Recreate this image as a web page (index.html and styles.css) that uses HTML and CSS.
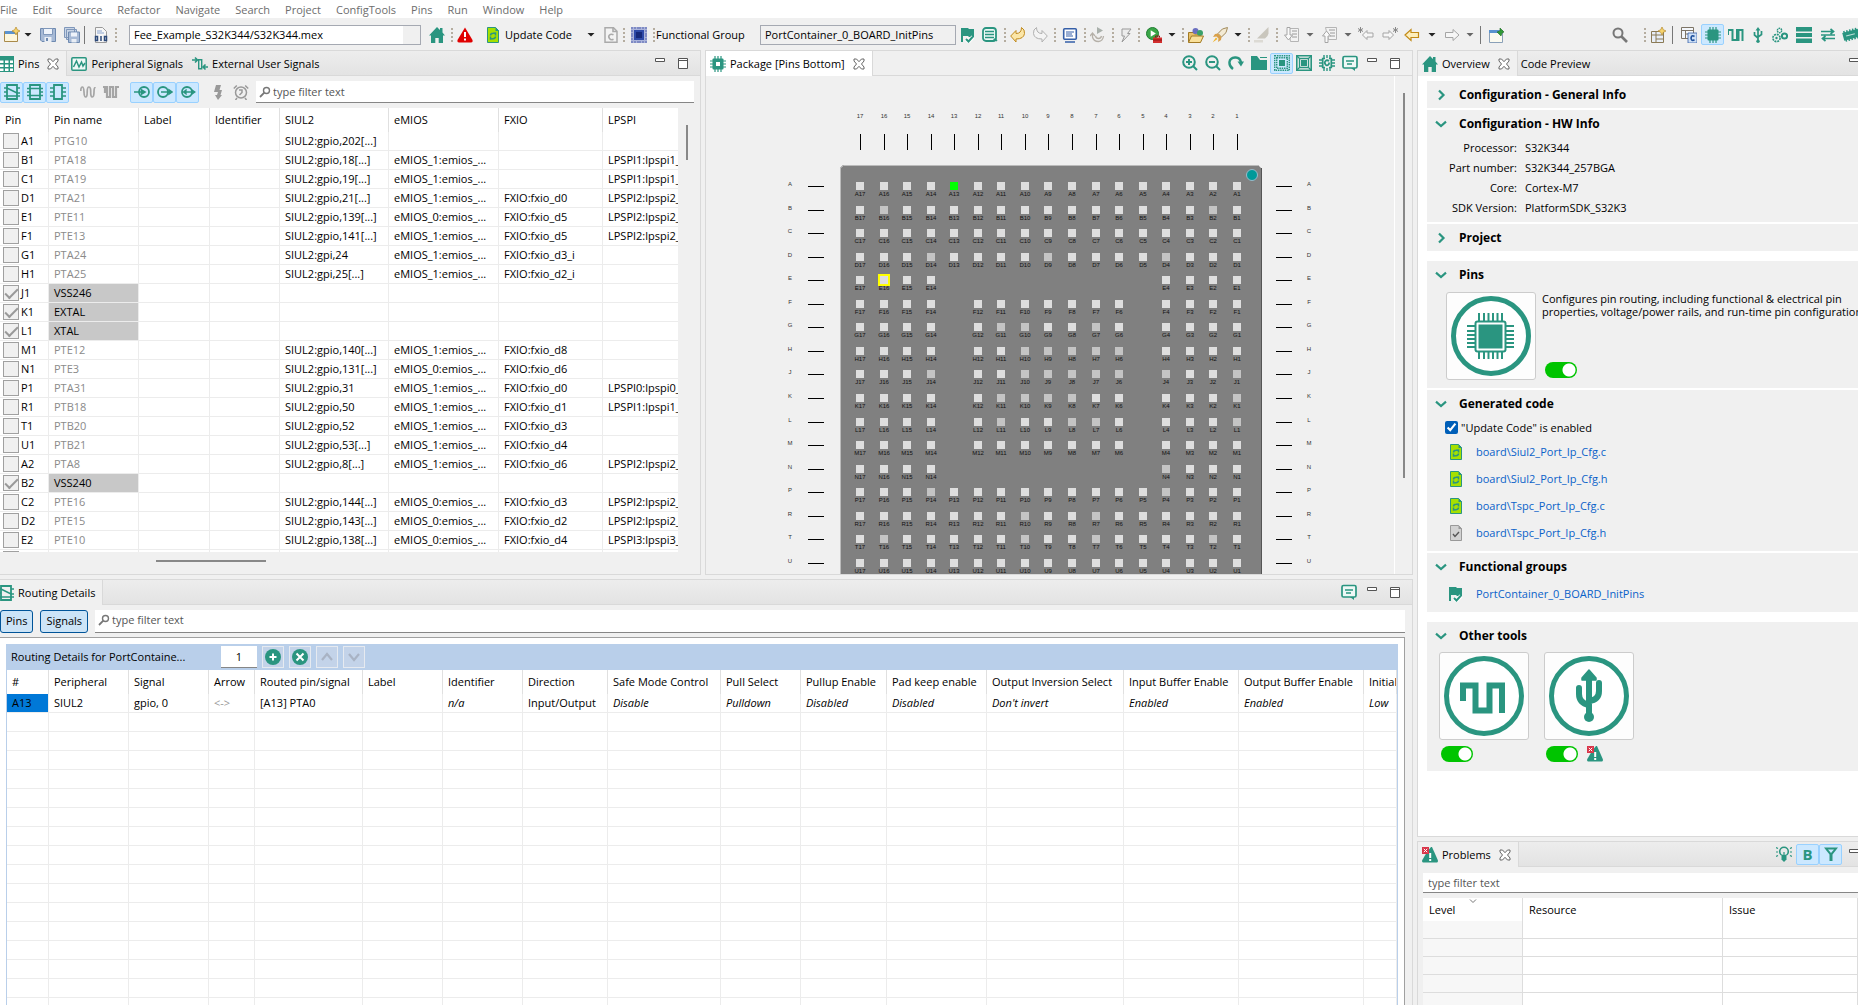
FILE: index.html
```html
<!DOCTYPE html>
<html lang="en">
<head>
<meta charset="utf-8">
<title>Fee_Example_S32K344 - Pins</title>
<link rel="stylesheet" href="styles.css">
</head>
<body>
<svg class="defs" aria-hidden="true">
  <symbol id="new" viewBox="0 0 16 16"><path d="M.5 4.5h13v10H.5z" fill="#fdf6dc" stroke="#a98a4a"/><path d="M1 4h12v3H1z" fill="#5b93cf"/><path d="M12 0l1.300 2.700L16 4l-2.700 1.300L12 8l-1.300-2.700L8 4l2.700-1.300z" fill="#f6d36b" stroke="#b58a2c" stroke-width=".7"/></symbol>
  <symbol id="save" viewBox="0 0 16 16"><path d="M.5 1.500h15v13H2l-1.500-1.500z" fill="#a7bad6" stroke="#6f8ab0"/><path d="M3.500 1.500h9v6h-9z" fill="#eef3fa" stroke="#7f97ba"/><path d="M4.500 10h7v5h-7z" fill="#e9eef5"/><path d="M6 11h2v3H6z" fill="#6f8ab0"/></symbol>
  <symbol id="saveall" viewBox="0 0 16 16"><path d="M.5.500h10v10H.5zM2.500 2.500h10v10h-10z" fill="#c9d5e6" stroke="#7f97ba"/><path d="M4.500 5h11v10.500h-11z" fill="#a7bad6" stroke="#6f8ab0"/><path d="M7 5.500h6v4H7z" fill="#eef3fa"/><path d="M7.500 12h5v3.500h-5z" fill="#e9eef5"/></symbol>
  <symbol id="bin" viewBox="0 0 16 16"><path d="M2.500.500h7l4 4v11h-11z" fill="#f6f6f6" stroke="#9a9a9a"/><path d="M4 4h5M4 6h7" stroke="#8aa4cf"/><path d="M2.500 9.500h2v4h-2zM11.500 9.500h2v4h-2zM8 9v5" fill="none" stroke="#2d4a7a" stroke-width="1.500"/></symbol>
  <symbol id="home" viewBox="0 0 16 16"><path d="M8 0l3 3V1h2.500v4.500L16 8.500h-2V16H9.700v-5H6.300v5H2V8.500H0z" fill="#2a9580"/></symbol>
  <symbol id="alert" viewBox="0 0 16 16"><path d="M8 .5L15.500 13q.5 2.500-1.500 2.500H2Q0 15.500.5 13z" fill="#e00000"/><path d="M7 5h2v5H7zM7 11.500h2v2H7z" fill="#fff"/></symbol>
  <symbol id="gen" viewBox="0 0 16 16"><path d="M2.500.500h8l3 3v12h-11z" fill="#a5e000" stroke="#2a9580"/><path d="M10.500 0v4H14z" fill="#2a9580"/><path d="M5.500 8.500Q5.500 6.500 8 6.300l2.500-.3v2.500M10.500 9.500q0 2-2.500 2.200l-2.500.3V9.500" fill="none" stroke="#2a9580" stroke-width="1.500"/></symbol>
  <symbol id="cdoc" viewBox="0 0 16 16"><path d="M2 .8h8.500L14 4.300v10.900H2z" fill="#f3f3f3" stroke="#aaa" stroke-width="1.500"/><path d="M10 .5v4h4M10.500 7.800Q8 6.500 6.500 8t0 3.500 4 .8" fill="none" stroke="#aaa" stroke-width="1.600"/></symbol>
  <symbol id="chipblue" viewBox="0 0 16 16"><path d="M0 0h16v16H0z" fill="#7f8bc4"/><path d="M0 2.500h16M0 5.500h16M0 10.500h16M0 13.500h16M2.500 0v16M5.500 0v16M10.500 0v16M13.500 0v16" stroke="#aab3da"/><path d="M3 3h10v10H3z" fill="#2e4aa8"/><path d="M5 5h6v6H5z" fill="#16297a"/></symbol>
  <symbol id="flag" viewBox="0 0 16 16"><path d="M1 1h7l1 1h5v8H9L8 9H3v6H1z" fill="#2a9580"/><path d="M6 12l2.500 2.500L13 10" fill="none" stroke="#fff" stroke-width="4"/><path d="M6 12l2.500 2.500L13 9.500" fill="none" stroke="#2a9580" stroke-width="2"/></symbol>
  <symbol id="db" viewBox="0 0 16 16"><rect x="1" y="1" width="13" height="13" rx="3" fill="#eef8f6" stroke="#2a9580" stroke-width="1.800"/><path d="M3 4.500h9M3 7.500h9M3 10.500h9" stroke="#2a9580" stroke-width="1.500"/><path d="M11 14l2-2 2 2" stroke="#2a9580" stroke-width="1.500" fill="none"/></symbol>
  <symbol id="undo" viewBox="0 0 16 16"><path d="M6 3.500v3q5.500 0 5.500-6 3.500 2 3 6-.7 5.500-8.500 5.500v3L.7 9z" fill="#fbe6a8" stroke="#c08a1e"/></symbol>
  <symbol id="redo" viewBox="0 0 16 16"><path d="M10 3.500v3q-5.500 0-5.500-6-3.500 2-3 6Q2.200 12 10 12v3l5.300-6z" fill="#f4f4f4" stroke="#b0b0b0"/></symbol>
  <symbol id="screen" viewBox="0 0 16 16"><rect x="1.700" y="1.700" width="12.600" height="10.600" rx="1" fill="#fff" stroke="#355fa8" stroke-width="1.600"/><path d="M4 5h8M4 7h6M4 9h7" stroke="#355fa8"/><path d="M3 15h10" stroke="#355fa8" stroke-width="1.500"/></symbol>
  <symbol id="refresh" viewBox="0 0 16 16"><path d="M7 0l6 3.500L7 7z" fill="#a9b0ab"/><path d="M2.500 7v3q1 4.500 6 4.500 4.500-.5 5-5.500M0 9l2.500-3L5 9M5.500 9q.5 2.500 3 2.500t3-2.500" fill="none" stroke="#b5b0a8" stroke-width="1.300"/></symbol>
  <symbol id="flash" viewBox="0 0 16 16"><path d="M4 2h9L9.500 6.500H12L4 15l2.500-6H4z" fill="#ececec" stroke="#999"/></symbol>
  <symbol id="run" viewBox="0 0 16 16"><circle cx="6.500" cy="6.500" r="6" fill="#3aa648" stroke="#1f7d30"/><path d="M4.700 3.200v6.600l5.200-3.300z" fill="#fff"/><path d="M7 10.500h9v5.500H7z" fill="#d22e2e"/><path d="M9.500 10.500v-1.500h4v1.500M7 13h9" stroke="#8e1414" fill="none"/></symbol>
  <symbol id="open" viewBox="0 0 16 16"><path d="M.5 5.500h5l1 1.500h6v8H.5z" fill="#e9c26a" stroke="#a27a25"/><circle cx="7.500" cy="4" r="3" fill="#6b6fc0"/><circle cx="12" cy="6" r="3" fill="#3aa06a"/><path d="M.5 15.500l3-6.500h12l-3 6.500z" fill="#f9e09a" stroke="#a27a25"/></symbol>
  <symbol id="rocket" viewBox="0 0 16 16"><path d="M15.500.5Q10 .5 6 6.500L9.500 10Q15.500 6 15.500.5z" fill="#f3ead4" stroke="#a18a5c"/><path d="M6 6.500l-3 .5L1 10l3.500-.5 2 2L6 15l3-2 .5-3z" fill="#d9a04a"/><path d="M4 10.500L.5 15.500 5.500 12z" fill="#f0b429"/></symbol>
  <symbol id="knife" viewBox="0 0 16 16"><path d="M14.500 0L3 11.500h8q3-2 3.500-5z" fill="#c9c6bd"/><path d="M0 13h9v2.500H0z" fill="#dcdad4"/></symbol>
  <symbol id="down" viewBox="0 0 16 16"><path d="M4.500 1.500h10v13h-8z" fill="#f3f3f3" stroke="#b5b5b5"/><path d="M8 4h5M8 7h5M8 10h5" stroke="#9a9a9a"/><path d="M3 .5h3V8h2.500l-4 5-4-5H3z" fill="#fafafa" stroke="#a5a5a5"/></symbol>
  <symbol id="up" viewBox="0 0 16 16"><path d="M3.500.500h11v12h-8z" fill="#f3f3f3" stroke="#b5b5b5"/><path d="M7 3h6M8 6h5M8 9h5" stroke="#9a9a9a"/><path d="M3 15.500h3V9h2.500l-4-5-4 5H3z" fill="#fafafa" stroke="#a5a5a5"/></symbol>
  <symbol id="backs" viewBox="0 0 16 16"><path d="M4.500 8L9 3.500v2.500h6v4H9v2.500z" fill="#f6f6f6" stroke="#a5a5a5"/><path d="M2.500 0v6M0 1.500l5 3M5 1.500l-5 3" stroke="#888"/></symbol>
  <symbol id="fwds" viewBox="0 0 16 16"><path d="M11.500 8L7 3.500v2.500H1v4h6v2.500z" fill="#f6f6f6" stroke="#a5a5a5"/><path d="M13.500 0v6M11 1.500l5 3M16 1.500l-5 3" stroke="#888"/></symbol>
  <symbol id="back" viewBox="0 0 16 16"><path d="M1 8l6-5.500v3h7.500v5H7v3z" fill="#fdeebb" stroke="#c28a17" stroke-width="1.200"/></symbol>
  <symbol id="fwd" viewBox="0 0 16 16"><path d="M15 8L9 2.500v3H1.500v5H9v3z" fill="#f6f6f6" stroke="#a5a5a5"/></symbol>
  <symbol id="pinned" viewBox="0 0 16 16"><path d="M.5 3.500h13v12H.5z" fill="#fbfaf0" stroke="#8aa0b8"/><path d="M0 3h10v3H0z" fill="#5b93cf"/><path d="M11 1l4 4-2 1-1 3-4-4 3-1z" fill="#2f9a36" stroke="#1c6a22" stroke-width=".6"/></symbol>
  <symbol id="search" viewBox="0 0 16 16"><circle cx="6" cy="6" r="4.500" fill="none" stroke="#777" stroke-width="2"/><path d="M9.500 9.500l5.500 5.500" stroke="#777" stroke-width="2.600"/></symbol>
  <symbol id="persp" viewBox="0 0 16 16"><path d="M1.500 4.500h12v11h-12z" fill="#e8eef7" stroke="#8a7a55"/><path d="M1.500 8h12M6 4.500v11M6 12h7" stroke="#8a7a55"/><path d="M12 0l1.300 2.700L16 4l-2.700 1.300L12 8l-1.300-2.700L8 4l2.700-1.300z" fill="#f6d36b" stroke="#b58a2c" stroke-width=".7"/></symbol>
  <symbol id="cpersp" viewBox="0 0 16 16"><path d="M.5.500h12v11H.5z" fill="#f3f6fa" stroke="#7d7466"/><path d="M.5 3.500h12M4.500 3.500v8M4.500 7h8" stroke="#7d7466"/><path d="M7 6h9v10H7z" fill="#cfe0f5" stroke="#355fa8" stroke-width=".8"/><path d="M13.500 9.500q-2-1.500-3 0t0 3.200 3 0" fill="none" stroke="#1d4f9c" stroke-width="1.600"/></symbol>
  <symbol id="chip" viewBox="0 0 16 16"><path d="M5 0v16M8 0v16M11 0v16M0 5h16M0 8h16M0 11h16" stroke="#2a9580" stroke-width="1.200"/><rect x="2.500" y="2.500" width="11" height="11" rx="1" fill="#2a9580"/></symbol>
  <symbol id="chiphole" viewBox="0 0 16 16"><path d="M5 0v16M8 0v16M11 0v16M0 5h16M0 8h16M0 11h16" stroke="#2a9580" stroke-width="1.200"/><rect x="2.500" y="2.500" width="11" height="11" rx="1" fill="#2a9580"/><path d="M6 6h4v4H6z" fill="#fff"/></symbol>
  <symbol id="wave" viewBox="0 0 16 16"><path d="M0 8V3h4.500v10H9V3h5.500v11M10.500 14V3" fill="none" stroke="#2a9580" stroke-width="2"/></symbol>
  <symbol id="usb" viewBox="0 0 16 16"><path d="M8 0l2.500 3.500h-5z" fill="#2a9580"/><path d="M8 2v12M4.500 5v3l3.500 3M11.500 4v3.500L8 10" fill="none" stroke="#2a9580" stroke-width="1.700"/><circle cx="8" cy="14.200" r="1.700" fill="#2a9580"/></symbol>
  <symbol id="gears" viewBox="0 0 16 16"><circle cx="4.500" cy="11" r="3.600" fill="none" stroke="#2a9580" stroke-width="1.600" stroke-dasharray="2 .8"/><circle cx="4.500" cy="11" r="1.200" fill="#2a9580"/><circle cx="7.500" cy="3.500" r="2.200" fill="none" stroke="#2a9580" stroke-width="1.400" stroke-dasharray="1.500 .6"/><circle cx="12.500" cy="9" r="2.600" fill="none" stroke="#2a9580" stroke-width="2"/></symbol>
  <symbol id="stack" viewBox="0 0 16 16"><path d="M0 0h16v4.500H0zM0 6h16v4H0zM0 11.500h16V16H0z" fill="#2a9580"/></symbol>
  <symbol id="swap" viewBox="0 0 16 16"><path d="M1 4.500h12M1 8h14M3 11.500h12M10.500 2l3 2.500-3 2.500M5.500 9l-3 2.500 3 2.500" fill="none" stroke="#2a9580" stroke-width="1.700"/></symbol>
  <symbol id="chiptilt" viewBox="0 0 16 16"><g transform="rotate(-15 8 8)"><path d="M3 2.500v11M6 2.500v11M9 2.500v11M12 2.500v11M15 2.500v11" stroke="#2a9580" stroke-width="1.500"/><path d="M1 4h16v8H1z" fill="#2a9580"/><path d="M4 8h9" stroke="#bfe0d8"/></g></symbol>
  <symbol id="grid" viewBox="0 0 16 16"><path d="M0 0h16v16H0z" fill="#2a9580"/><path d="M1.500 4.500h4v2.500h-4zM7 4.500h3.500v2.500H7zM12 4.500h3v2.500h-3zM1.500 8.500h4V11h-4zM7 8.500h3.500V11H7zM12 8.500h3V11h-3zM1.500 12.500h4V15h-4zM7 12.500h3.500V15H7zM12 12.500h3V15h-3z" fill="#fff"/></symbol>
  <symbol id="psig" viewBox="0 0 16 16"><rect x=".8" y="1.800" width="14.400" height="12.400" rx="1" fill="#eef8f6" stroke="#2a9580" stroke-width="1.500"/><path d="M2.500 11l3-6 2.500 6 2.500-5 1.500 4 2-3" fill="none" stroke="#2a9580" stroke-width="1.500"/></symbol>
  <symbol id="esig" viewBox="0 0 16 16"><path d="M0 4h5M3 1.500L5.500 4 3 6.500M16 11h-4M13.500 8.500L11 11l2.500 2.500" fill="none" stroke="#2a9580" stroke-width="1.600"/><path d="M6.700 3.700h3v9h-3z" fill="none" stroke="#2a9580" stroke-width="1.400"/></symbol>
  <symbol id="close" viewBox="0 0 12 12"><path d="M1 1h2.500L6 3.700 8.500 1H11v2L8.500 6 11 9v2H8.500L6 8.300 3.500 11H1V9l2.500-3L1 3z" fill="#fff" stroke="#666"/></symbol>
  <symbol id="min" viewBox="0 0 12 12"><path d="M1.500 1.500h9v3h-9z" fill="#fff" stroke="#555"/></symbol>
  <symbol id="max" viewBox="0 0 12 12"><path d="M1.500 1.500h9v10h-9z" fill="#fff" stroke="#555"/><path d="M1.500 3.500h9" stroke="#555"/></symbol>
  <symbol id="t1" viewBox="0 0 16 16"><path d="M3 1h10v14H3z" fill="none" stroke="#2a9580" stroke-width="1.800"/><path d="M0 4h3l10 5h3M0 8h3M0 12h16M13 4h3" fill="none" stroke="#2a9580" stroke-width="1.700"/></symbol>
  <symbol id="t2" viewBox="0 0 16 16"><path d="M3 1h10v14H3z" fill="none" stroke="#2a9580" stroke-width="1.800"/><path d="M0 4.500h16M0 8h3M13 8h3M0 11.500h16" stroke="#2a9580" stroke-width="1.700"/></symbol>
  <symbol id="t3" viewBox="0 0 16 16"><path d="M4 1h8v14H4z" fill="none" stroke="#2a9580" stroke-width="1.800"/><path d="M0 4h4M0 8h4M0 12h4M12 4h4M12 8h4M12 12h4" stroke="#2a9580" stroke-width="1.700"/></symbol>
  <symbol id="analog" viewBox="0 0 16 16"><path d="M.8 7q0-4 1.500-4t1.700 5 1.700 5 1.500-5T9 3t1.700 5 1.600 5T14 8t1.500-4" fill="none" stroke="#a5a5a5" stroke-width="1.700"/></symbol>
  <symbol id="digital" viewBox="0 0 16 16"><path d="M0 3h4v10h3V3h3v10h3V3h3M2 3v6" fill="none" stroke="#a5a5a5" stroke-width="2.200"/></symbol>
  <symbol id="in" viewBox="0 0 16 16"><circle cx="10" cy="8" r="5" fill="none" stroke="#2a9580" stroke-width="1.800"/><path d="M0 8h10M7.500 6L11 8l-3.500 2z" fill="#2a9580" stroke="#2a9580" stroke-width="1.600"/></symbol>
  <symbol id="out" viewBox="0 0 16 16"><circle cx="6" cy="8" r="5" fill="none" stroke="#2a9580" stroke-width="1.800"/><path d="M4 8h9M12 6l3 2-3 2z" fill="#2a9580" stroke="#2a9580" stroke-width="1.600"/></symbol>
  <symbol id="io" viewBox="0 0 16 16"><circle cx="7" cy="8" r="5" fill="none" stroke="#2a9580" stroke-width="1.800"/><path d="M4 8h9M6 6L3.500 8 6 10zM12 6l3 2-3 2z" fill="#2a9580" stroke="#2a9580" stroke-width="1.300"/></symbol>
  <symbol id="bolt" viewBox="0 0 16 16"><path d="M6 1h5L9.500 6H12l-1.500 5H12l-4 5-3-5h2l1-3H4z" fill="#999"/></symbol>
  <symbol id="clock" viewBox="0 0 16 16"><circle cx="8" cy="8.500" r="5.500" fill="none" stroke="#999" stroke-width="1.500"/><path d="M.8 4.500l3-3M15.200 4.500l-3-3M6 6h3v2.500L6.500 11M4 14l-1.500 2M12 14l1.500 2" fill="none" stroke="#999" stroke-width="1.500"/></symbol>
  <symbol id="mag" viewBox="0 0 12 12"><circle cx="7.500" cy="4.500" r="3" fill="#fff" stroke="#777" stroke-width="1.400"/><path d="M5.300 6.700L1 11" stroke="#777" stroke-width="1.800"/></symbol>
  <symbol id="zin" viewBox="0 0 16 16"><circle cx="7" cy="7" r="5.800" fill="none" stroke="#2a9580" stroke-width="2"/><path d="M11 11l4 4M4 7h6M7 4v6" stroke="#2a9580" stroke-width="2"/></symbol>
  <symbol id="zout" viewBox="0 0 16 16"><circle cx="7" cy="7" r="5.800" fill="none" stroke="#2a9580" stroke-width="2"/><path d="M11 11l4 4M4 7h6" stroke="#2a9580" stroke-width="2"/></symbol>
  <symbol id="rot" viewBox="0 0 16 16"><path d="M5 14Q1 11 1.500 7T7 2.500t6 5" fill="none" stroke="#2a9580" stroke-width="2.400"/><path d="M9.500 6.500H16l-3 5z" fill="#2a9580"/></symbol>
  <symbol id="folder" viewBox="0 0 16 16"><path d="M0 1h6l3 4h7v10H0z" fill="#2a9580"/><path d="M9 2.500h7" stroke="#2a9580"/></symbol>
  <symbol id="bga" viewBox="0 0 16 16"><path d="M.7.700h14.600v14.600H.7z" fill="none" stroke="#2a9580" stroke-width="1.400" stroke-dasharray="1.500 .8"/><path d="M2.700 2.700h10.600v10.600H2.700z" fill="none" stroke="#2a9580" stroke-width="1.400" stroke-dasharray="1.500 .8"/><path d="M5 5h6v6H5z" fill="#2a9580"/></symbol>
  <symbol id="qfp" viewBox="0 0 16 16"><path d="M.8.800h14.400v14.400H.8z" fill="none" stroke="#2a9580" stroke-width="1.600"/><path d="M3.500 3.500h9v9h-9zM1 1l3 3M15 1l-3 3M1 15l3-3M15 15l-3-3" fill="none" stroke="#2a9580" stroke-width="1.300"/><path d="M5 5h6v6H5z" fill="#2a9580"/></symbol>
  <symbol id="chipsync" viewBox="0 0 16 16"><path d="M5 0v3M8 0v3M11 0v3M5 13v3M8 13v3M11 13v3M0 5h3M0 8h3M0 11h3M13 5h3M13 8h3M13 11h3" stroke="#2a9580" stroke-width="1.400"/><path d="M6 3.500H3.700v9H6M10 3.500h2.300v9H10M10 6Q8 4.500 6.500 6T6.500 9.500 10 9V7.500" fill="none" stroke="#2a9580" stroke-width="1.700"/></symbol>
  <symbol id="note" viewBox="0 0 16 16"><rect x="1" y="1.500" width="14" height="11.500" rx="1.500" fill="#eef8f6" stroke="#2a9580" stroke-width="1.700"/><path d="M4 6h8M5 9h5" stroke="#2a9580" stroke-width="1.400"/><path d="M9 13h4v3z" fill="#2a9580"/></symbol>
  <symbol id="warn" viewBox="0 0 16 16"><path d="M9 0h1L16 13.500q0 2-1 2H1q-1 0-1-2L5 5z" fill="#2a9580"/><path d="M7.200 6h2v5h-2zM7.200 12h2v2h-2z" fill="#fff"/><path d="M0 0h7v7H0z" fill="#d9364a"/><path d="M1.800 1.800l3.400 3.400M5.200 1.800L1.800 5.200" stroke="#fff"/></symbol>
  <symbol id="bulb" viewBox="0 0 16 16"><circle cx="8" cy="5.500" r="4.300" fill="none" stroke="#2a9580" stroke-width="1.600"/><path d="M5.500 10h5v3.500L8 16l-2.500-2.500z" fill="#2a9580"/><path d="M0 1.500l2 1M0 6h2M0 10.500l2-1M16 1.500l-2 1M16 6h-2M16 10.500l-2-1M8 6v4" stroke="#2a9580" stroke-width="1.200"/></symbol>
  <symbol id="filter" viewBox="0 0 16 16"><path d="M1 1.500h14L9.500 8.500V15h-3V8.500z" fill="#2a9580"/><path d="M5 3.500h6L8 7z" fill="#cce8ff"/></symbol>
  <symbol id="plus" viewBox="0 0 16 16"><circle cx="8" cy="8" r="8" fill="#2a9580"/><path d="M4.500 8h7M8 4.500v7" stroke="#fff" stroke-width="2"/></symbol>
  <symbol id="cross" viewBox="0 0 16 16"><circle cx="8" cy="8" r="8" fill="#2a9580"/><path d="M4.500 4.500l7 7M11.500 4.500l-7 7" stroke="#fff" stroke-width="2"/></symbol>
  <symbol id="chu" viewBox="0 0 16 16"><path d="M3 11l5-6 5 6" fill="none" stroke="#a9b3c4" stroke-width="2.200"/></symbol>
  <symbol id="chd" viewBox="0 0 16 16"><path d="M3 5l5 6 5-6" fill="none" stroke="#a9b3c4" stroke-width="2.200"/></symbol>
  <symbol id="docok" viewBox="0 0 16 16"><path d="M2.500.500h8l3 3v12h-11z" fill="#d2d2d2" stroke="#999"/><path d="M10.500 0v4H14z" fill="#999"/><path d="M5 9l2 2.500L11 7" fill="none" stroke="#555" stroke-width="1.400"/></symbol>
  <symbol id="right" viewBox="0 0 12 12"><path d="M4 1.500L8.500 6 4 10.500" fill="none" stroke="#2a9580" stroke-width="2.200"/></symbol>
  <symbol id="openv" viewBox="0 0 12 12"><path d="M1 3.700L6 8l5-4.300" fill="none" stroke="#2a9580" stroke-width="2.200"/></symbol>
  <symbol id="sort" viewBox="0 0 8 4"><path d="M1 .5l3 3 3-3" fill="none" stroke="#777"/></symbol>
</svg>

<nav class="menubar">
  <button>File</button><button>Edit</button><button>Source</button><button>Refactor</button><button>Navigate</button><button>Search</button><button>Project</button><button>ConfigTools</button><button>Pins</button><button>Run</button><button>Window</button><button>Help</button>
</nav>

<div class="toolbar">
  <svg class="ic m4"><use href="#new"/></svg><i class="caret m4"></i>
  <svg class="ic m8"><use href="#save"/></svg><svg class="ic m8"><use href="#saveall"/></svg><i class="sep m4"></i>
  <svg class="ic m8"><use href="#bin"/></svg><i class="dots"></i>
  <select class="combo combo-file m12" aria-label="Configuration file"><option>Fee_Example_S32K344/S32K344.mex</option></select>
  <svg class="ic m8"><use href="#home"/></svg><i class="dots"></i><svg class="ic m4"><use href="#alert"/></svg>
  <button class="update m12"><svg class="ic"><use href="#gen"/></svg>Update Code</button><i class="caret m12"></i>
  <svg class="ic m8"><use href="#cdoc"/></svg><i class="dots m4"></i><svg class="ic"><use href="#chipblue"/></svg><i class="dots"></i>
  <label class="grouplabel" for="group">Functional Group</label>
  <select class="combo combo-group m12" id="group"><option>PortContainer_0_BOARD_InitPins</option></select>
  <svg class="ic m4"><use href="#flag"/></svg><svg class="ic"><use href="#db"/></svg><i class="dots"></i>
  <svg class="ic m4"><use href="#undo"/></svg><svg class="ic"><use href="#redo"/></svg><i class="dots"></i>
  <svg class="ic"><use href="#screen"/></svg><i class="dots"></i><svg class="ic m4"><use href="#refresh"/></svg><i class="dots"></i>
  <svg class="ic m4"><use href="#flash"/></svg><i class="dots m4"></i><svg class="ic"><use href="#run"/></svg><i class="caret"></i><i class="dots"></i>
  <svg class="ic m4"><use href="#open"/></svg><svg class="ic m8"><use href="#rocket"/></svg><i class="caret"></i><i class="dots"></i>
  <svg class="ic m4"><use href="#knife"/></svg><i class="dots"></i><svg class="ic"><use href="#down"/></svg><i class="caret dim"></i>
  <svg class="ic m8"><use href="#up"/></svg><i class="caret dim"></i><svg class="ic"><use href="#backs"/></svg><svg class="ic m8"><use href="#fwds"/></svg>
  <svg class="ic"><use href="#back"/></svg><i class="caret m8"></i><svg class="ic m8"><use href="#fwd"/></svg><i class="caret dim"></i><i class="sep"></i>
  <svg class="ic m8"><use href="#pinned"/></svg>
  <span class="spacer"></span>
  <svg class="ic"><use href="#search"/></svg><i class="dots m16"></i><svg class="ic m4"><use href="#persp"/></svg><i class="sep"></i>
  <svg class="ic m8"><use href="#cpersp"/></svg><button class="tbtn on m4" aria-label="Pins tool"><svg class="ic"><use href="#chip"/></svg></button>
  <svg class="ic m4"><use href="#wave"/></svg><svg class="ic"><use href="#usb"/></svg><svg class="ic"><use href="#gears"/></svg><svg class="ic m8"><use href="#stack"/></svg><svg class="ic m8"><use href="#swap"/></svg><svg class="ic"><use href="#chiptilt"/></svg>
</div>

<main class="workbench">
  <div class="left">
    <div class="top">
      <section class="panel pins">
        <header class="tabs">
          <button class="tab sel first"><svg class="ic"><use href="#grid"/></svg>Pins<svg class="x"><use href="#close"/></svg></button>
          <button class="tab"><svg class="ic"><use href="#psig"/></svg>Peripheral Signals</button>
          <button class="tab"><svg class="ic"><use href="#esig"/></svg>External User Signals</button>
          <span class="spacer"></span>
          <svg class="win"><use href="#min"/></svg><svg class="win"><use href="#max"/></svg>
        </header>
        <div class="filterbar">
          <div class="bgroup"><button class="tbtn on" aria-label="Routed pins"><svg class="ic"><use href="#t1"/></svg></button><button class="tbtn on" aria-label="Partially routed pins"><svg class="ic"><use href="#t2"/></svg></button><button class="tbtn on" aria-label="Unrouted pins"><svg class="ic"><use href="#t3"/></svg></button></div>
          <div class="bgroup b2"><button class="tbtn" aria-label="Analog"><svg class="ic"><use href="#analog"/></svg></button><button class="tbtn" aria-label="Digital"><svg class="ic"><use href="#digital"/></svg></button></div>
          <div class="bgroup b3"><button class="tbtn on" aria-label="Input"><svg class="ic"><use href="#in"/></svg></button><button class="tbtn on" aria-label="Output"><svg class="ic"><use href="#out"/></svg></button><button class="tbtn on" aria-label="Input and output"><svg class="ic"><use href="#io"/></svg></button></div>
          <div class="bgroup b2"><button class="tbtn" aria-label="Power"><svg class="ic"><use href="#bolt"/></svg></button><button class="tbtn" aria-label="Clock"><svg class="ic"><use href="#clock"/></svg></button></div>
          <label class="filter"><svg class="mag"><use href="#mag"/></svg><input type="text" placeholder="type filter text" aria-label="Filter pins"></label>
        </div>
        <div class="pinarea">
          <div class="pinwrap">
            <table class="grid pintable">
              <colgroup><col class="w49"><col class="w90"><col class="w71"><col class="w70"><col class="w109"><col class="w110"><col class="w104"><col class="w100"></colgroup>
              <thead><tr><th>Pin</th><th>Pin name</th><th>Label</th><th>Identifier</th><th>SIUL2</th><th>eMIOS</th><th>FXIO</th><th>LPSPI</th></tr></thead>
              <tbody id="pinrows"></tbody>
            </table>
          </div>
          <div class="vbar"><i></i></div>
        </div>
        <div class="hbar"><i></i></div>
      </section>

      <section class="panel package">
        <header class="tabs">
          <button class="tab sel white"><svg class="ic"><use href="#chiphole"/></svg>Package [Pins Bottom]<svg class="x"><use href="#close"/></svg></button>
          <span class="spacer"></span>
          <div class="viewtools">
            <svg class="ic"><use href="#zin"/></svg><svg class="ic"><use href="#zout"/></svg><svg class="ic"><use href="#rot"/></svg><svg class="ic"><use href="#folder"/></svg>
            <button class="tbtn on" aria-label="Show package"><svg class="ic"><use href="#bga"/></svg></button>
            <svg class="ic"><use href="#qfp"/></svg><svg class="ic"><use href="#chipsync"/></svg><svg class="ic"><use href="#note"/></svg>
          </div>
          <svg class="win"><use href="#min"/></svg><svg class="win"><use href="#max"/></svg>
        </header>
        <div class="canvas">
          <div class="drawing"><svg id="bga-drawing" width="688" height="498" viewBox="707 76 688 498" role="img" aria-label="Package, bottom view"></svg></div>
          <div class="vbar long"><i></i></div>
        </div>
      </section>
    </div>

    <section class="panel routing">
      <header class="tabs">
        <button class="tab sel first"><svg class="ic"><use href="#t1"/></svg>Routing Details</button>
        <span class="spacer"></span>
        <svg class="ic"><use href="#note"/></svg><svg class="win"><use href="#min"/></svg><svg class="win"><use href="#max"/></svg>
      </header>
      <div class="rfilter">
        <button class="pill">Pins</button><button class="pill">Signals</button>
        <label class="filter"><svg class="mag"><use href="#mag"/></svg><input type="text" placeholder="type filter text" aria-label="Filter routing"></label>
      </div>
      <div class="rbody">
        <div class="rbox">
          <div class="rhead">
            <span class="rtitle">Routing Details for PortContaine...</span>
            <input class="count" type="text" value="1" aria-label="Row count">
            <button class="sq" aria-label="Add"><svg class="ic"><use href="#plus"/></svg></button><button class="sq" aria-label="Remove"><svg class="ic"><use href="#cross"/></svg></button><button class="sq" aria-label="Move up"><svg class="ic"><use href="#chu"/></svg></button><button class="sq" aria-label="Move down"><svg class="ic"><use href="#chd"/></svg></button>
          </div>
          <table class="grid rtable">
            <colgroup><col class="w42"><col class="w80"><col class="w80"><col class="w46"><col class="w108"><col class="w80"><col class="w80"><col class="w85"><col class="w113"><col class="w80"><col class="w86"><col class="w100"><col class="w137"><col class="w115"><col class="w125"><col></colgroup>
            <thead><tr><th>#</th><th>Peripheral</th><th>Signal</th><th>Arrow</th><th>Routed pin/signal</th><th>Label</th><th>Identifier</th><th>Direction</th><th>Safe Mode Control</th><th>Pull Select</th><th>Pullup Enable</th><th>Pad keep enable</th><th>Output Inversion Select</th><th>Input Buffer Enable</th><th>Output Buffer Enable</th><th>Initial</th></tr></thead>
            <tbody id="routes"><tr><td class="selcell">A13</td><td>SIUL2</td><td>gpio, 0</td><td class="arrow">&lt;-&gt;</td><td>[A13] PTA0</td><td></td><td><em>n/a</em></td><td>Input/Output</td><td><em>Disable</em></td><td><em>Pulldown</em></td><td><em>Disabled</em></td><td><em>Disabled</em></td><td><em>Don't invert</em></td><td><em>Enabled</em></td><td><em>Enabled</em></td><td><em>Low</em></td></tr></tbody>
          </table>
        </div>
      </div>
    </section>
  </div>

  <div class="right">
    <section class="panel overview">
      <header class="tabs">
        <button class="tab sel"><svg class="ic"><use href="#home"/></svg>Overview<svg class="x"><use href="#close"/></svg></button>
        <button class="tab plain">Code Preview</button>
        <span class="spacer"></span>
        <svg class="win edge"><use href="#min"/></svg>
      </header>
      <div class="ovbody">
        <div class="sec"><h2><svg><use href="#right"/></svg>Configuration - General Info</h2></div>
        <div class="sec"><h2><svg><use href="#openv"/></svg>Configuration - HW Info</h2>
          <dl><dt>Processor:</dt><dd>S32K344</dd><dt>Part number:</dt><dd>S32K344_257BGA</dd><dt>Core:</dt><dd>Cortex-M7</dd><dt>SDK Version:</dt><dd>PlatformSDK_S32K3</dd></dl>
        </div>
        <div class="sec"><h2><svg><use href="#right"/></svg>Project</h2></div>
        <div class="sec gap"><h2><svg><use href="#openv"/></svg>Pins</h2>
          <div class="tool">
            <button class="big" aria-label="Open Pins tool"><svg viewBox="0 0 80 80"><circle cx="40" cy="40" r="37.500" fill="#fff" stroke="#2a9580" stroke-width="5"/><path d="M28 17v46M33 17v46M37.500 17v46M42 17v46M46.500 17v46M51 17v46M16 30h47M16 35h47M16 39h47M16 43h47M16 47h47M16 51h47" stroke="#2a9580" stroke-width="2"/><rect x="24.500" y="25.500" width="30" height="30" rx="2" fill="#fff" stroke="#2a9580" stroke-width="2"/><path d="M27.500 28.500h24v24h-24z" fill="#2a9580"/></svg></button>
            <div class="tooltext"><p>Configures pin routing, including functional &amp; electrical pin<br>properties, voltage/power rails, and run-time pin configuration.</p><input class="toggle" type="checkbox" checked aria-label="Pins tool enabled"></div>
          </div>
        </div>
        <div class="sec"><h2><svg><use href="#openv"/></svg>Generated code</h2>
          <label class="check"><input type="checkbox" checked>"Update Code" is enabled</label>
          <ul><li><svg class="ic"><use href="#gen"/></svg><a href="#">board\Siul2_Port_Ip_Cfg.c</a></li><li><svg class="ic"><use href="#gen"/></svg><a href="#">board\Siul2_Port_Ip_Cfg.h</a></li><li><svg class="ic"><use href="#gen"/></svg><a href="#">board\Tspc_Port_Ip_Cfg.c</a></li><li><svg class="ic"><use href="#docok"/></svg><a href="#">board\Tspc_Port_Ip_Cfg.h</a></li></ul>
        </div>
        <div class="sec"><h2><svg><use href="#openv"/></svg>Functional groups</h2>
          <ul><li><svg class="ic"><use href="#flag"/></svg><a href="#">PortContainer_0_BOARD_InitPins</a></li></ul>
        </div>
        <div class="sec gap"><h2><svg><use href="#openv"/></svg>Other tools</h2>
          <div class="others">
            <div><button class="big" aria-label="Open Clocks tool"><svg viewBox="0 0 80 80"><circle cx="40" cy="40" r="37.500" fill="#fff" stroke="#2a9580" stroke-width="5"/><path d="M19 45V29.500h12.500v25h14v-25h12.500V57" fill="none" stroke="#2a9580" stroke-width="6"/></svg></button><div class="trow"><input class="toggle" type="checkbox" checked aria-label="Clocks tool enabled"></div></div>
            <div><button class="big" aria-label="Open Peripherals tool"><svg viewBox="0 0 80 80"><circle cx="40" cy="40" r="37.500" fill="#fff" stroke="#2a9580" stroke-width="5"/><path d="M40 14l7 8v2H33v-2z" fill="#2a9580" stroke="#2a9580" stroke-width="1.500" stroke-linejoin="round"/><path d="M40 20v40M30 32v6q0 9 10 11M50 27v8q0 9-10 10" fill="none" stroke="#2a9580" stroke-width="6" stroke-linecap="round"/><circle cx="40" cy="61" r="5" fill="#2a9580"/></svg></button><div class="trow"><input class="toggle" type="checkbox" checked aria-label="Peripherals tool enabled"><svg class="ic"><use href="#warn"/></svg></div></div>
          </div>
        </div>
      </div>
    </section>

    <section class="panel problems">
      <header class="tabs">
        <button class="tab sel"><svg class="ic"><use href="#warn"/></svg>Problems<svg class="x"><use href="#close"/></svg></button>
        <span class="spacer"></span>
        <svg class="ic"><use href="#bulb"/></svg>
        <div class="bgroup b4"><button class="tbtn on bold">B</button><button class="tbtn on" aria-label="Filter"><svg class="ic"><use href="#filter"/></svg></button></div>
        <svg class="win edge"><use href="#min"/></svg>
      </header>
      <div class="pbody">
        <input class="pfilter" type="text" placeholder="type filter text" aria-label="Filter problems">
        <table class="ptable">
          <colgroup><col class="w100"><col class="w200"><col></colgroup>
          <thead><tr><th class="sorted"><svg class="sorticon"><use href="#sort"/></svg>Level</th><th>Resource</th><th>Issue</th></tr></thead>
          <tbody><tr><td></td><td></td><td></td></tr><tr><td></td><td></td><td></td></tr><tr><td></td><td></td><td></td></tr><tr><td></td><td></td><td></td></tr><tr><td></td><td></td><td></td></tr></tbody>
        </table>
      </div>
    </section>
  </div>
</main>
<script src="app.js"></script>
</body>
</html>
```

FILE: styles.css
```css
* { box-sizing: border-box; }
body, button, input, select { font-family: "Open Sans", "Noto Sans", sans-serif; font-size: 11px; line-height: 16px; color: #000; }
body { margin: 0; height: 100vh; display: flex; flex-direction: column; background: #f0f0f0; overflow: hidden; }
button { margin: 0; padding: 0; border: 0; background: none; white-space: nowrap; }
input { margin: 0; }
svg { display: block; flex: none; }
.defs { position: absolute; width: 0; height: 0; }
.ic { width: 16px; height: 16px; }
.spacer { flex: 1; }

.menubar { flex: none; height: 18px; display: flex; align-items: flex-end; gap: 15px; background: #fff; overflow: hidden; }
.menubar button { color: #6d6d6d; }

.toolbar { flex: none; height: 32px; display: flex; align-items: center; overflow: hidden; padding-bottom: 1px; padding-top: 2px; }
.toolbar > * { flex: none; margin-left: 6px; }
.toolbar > .spacer { flex: 1; margin: 0; }
.toolbar > .m4 { margin-left: 4px; }
.toolbar > .m8 { margin-left: 8px; }
.toolbar > .m12 { margin-left: 12px; }
.toolbar > .m16 { margin-left: 16px; }
.caret { width: 8px; height: 4px; background: #222; clip-path: polygon(0 0, 100% 0, 50% 100%); }
.caret.dim { background: #666; }
.sep { width: 1px; height: 18px; background: #777; }
.dots { width: 2px; height: 14px; background: repeating-linear-gradient(#b5ada0 0 2px, transparent 2px 4px); }
.combo { appearance: none; height: 20px; border: 1px solid #a5a9b2; border-radius: 0; background: #fff; padding: 0 4px; }
.combo-file { width: 292px; background: linear-gradient(90deg, #fff calc(100% - 17px), #f0f0f0 0); }
.combo-group { width: 196px; background: #f0f0f0; }
.update { display: flex; align-items: center; gap: 4px; width: 90px; }
.toolbar > .grouplabel { width: 92px; margin-left: 1px; white-space: nowrap; }
.tbtn { width: 23px; height: 21px; display: flex; align-items: center; justify-content: center; border: 1px solid transparent; border-radius: 2px; }
.tbtn.on { background: #cce8ff; border-color: #99d1ff; }
.bold { color: #2a9580; font-weight: 700; font-size: 15px; }

.workbench { flex: 1; min-height: 0; display: grid; grid-template-columns: minmax(0, 1413fr) minmax(0, 441fr); gap: 4px; }
.left { min-height: 0; display: grid; grid-template-rows: minmax(0, 525fr) minmax(0, 426fr); gap: 4px; }
.top { min-height: 0; display: grid; grid-template-columns: minmax(0, 701fr) minmax(0, 708fr); gap: 4px; }
.right { min-height: 0; display: grid; grid-template-rows: minmax(0, 787fr) minmax(0, 164fr); gap: 4px; }
.panel { min-height: 0; display: flex; flex-direction: column; border: 1px solid #d9d9d9; overflow: hidden; }
.pins, .routing { border-left: 0; }
.routing, .problems { border-bottom: 0; }
.overview, .problems { border-right: 0; }

.tabs { flex: none; height: 25px; display: flex; align-items: center; background: linear-gradient(#ededed, #e3e3e3); border-bottom: 1px solid #d9d9d9; }
.package .tabs { background: #f0f0f0; }
.tab { height: 25px; display: flex; align-items: center; gap: 4px; padding: 1px 5px 0 4px; flex: none; }
.tab.sel { background: #f0f0f0; border-right: 1px solid #d9d9d9; padding-right: 7px; }
.tab.white { background: #fff; }
.tab.first { padding-left: 0; margin-left: -2px; }
.tab.plain { padding-left: 3px; }
.x { width: 12px; height: 12px; margin-left: 4px; }
.win { width: 12px; height: 12px; margin-right: 11px; }
.win.edge { margin: 0 -2px 0 6px; }
.routing .tabs .ic { margin-right: 9px; }
.routing .tabs .tab .ic { margin-right: 0; }
.viewtools { display: flex; align-items: center; gap: 7px; margin-right: 8px; }
.viewtools .tbtn { margin: 0 -4px; }

.filterbar { flex: none; height: 32px; display: flex; align-items: center; padding-right: 6px; }
.bgroup { display: flex; }
.b2 { margin-left: 7px; }
.b3 { margin-left: 8px; }
.filter { flex: 1; height: 22px; display: flex; align-items: center; gap: 2px; padding-left: 3px; margin-left: 4px; background: #fff; border-bottom: 1px solid #868686; }
.filter input { flex: 1; border: 0; outline: 0; padding: 0; background: none; }
.mag { width: 12px; height: 12px; }
::placeholder { color: #555; opacity: 1; }

.grid { border-collapse: separate; border-spacing: 0; table-layout: fixed; background: #fff; }
.grid th, .grid td { text-align: left; font-weight: 400; padding: 0 0 0 5px; border-right: 1px solid #ececec; white-space: nowrap; overflow: hidden; line-height: 16px; }
.grid th { height: 24px; border-color: #e0e0e0; }
.grid td { border-bottom: 1px solid #ececec; height: 19px; }
.w42 { width: 42px; } .w46 { width: 46px; } .w49 { width: 49px; } .w70 { width: 70px; } .w71 { width: 71px; }
.w80 { width: 80px; } .w85 { width: 85px; } .w86 { width: 86px; } .w90 { width: 90px; } .w100 { width: 100px; }
.w104 { width: 104px; } .w108 { width: 108px; } .w109 { width: 109px; } .w110 { width: 110px; } .w113 { width: 113px; }
.w115 { width: 115px; } .w125 { width: 125px; } .w137 { width: 137px; } .w200 { width: 200px; }

.pinarea { flex: 1; min-height: 0; display: flex; }
.pinwrap { flex: 1; min-width: 0; overflow: hidden; background: #fff; }
.pintable { width: 703px; }
.pintable td:first-child { padding-left: 3px; }
.pintable td:nth-child(2) { color: #8a8a8a; }
.pintable tr.fixed td:nth-child(2) { background: #c8c8c8; color: #000; }
.pinlabel { display: flex; align-items: center; gap: 2px; }
.pinlabel input { appearance: none; width: 16px; height: 16px; border: 1px solid #a0a0a0; background: #f0f0f0; display: grid; place-items: center; }
.pinlabel input:checked::after { content: ""; width: 11px; height: 5px; border: solid #999; border-width: 0 0 2px 2px; transform: rotate(-45deg) translate(1px, -1px); }
.vbar { width: 22px; flex: none; padding: 17px 0 0 8px; }
.vbar i { display: block; width: 2px; height: 35px; background: #888; }
.vbar.long { width: 18px; border-left: 1px solid #fff; }
.vbar.long i { height: 385px; }
.hbar { flex: none; height: 22px; padding: 8px 0 0 156px; }
.hbar i { display: block; width: 110px; height: 2px; background: #888; }

.canvas { flex: 1; min-height: 0; display: flex; }
.drawing { flex: 1; min-width: 0; overflow: hidden; display: flex; justify-content: center; }
.drawing text { font: 6px "Liberation Sans", Arial, sans-serif; text-anchor: middle; }

.rfilter { flex: none; height: 32px; display: flex; align-items: center; padding-right: 7px; }
.rfilter .filter { height: 23px; margin-left: 7px; padding-bottom: 2px; }
.pill { height: 23px; padding: 0 5px; border: 1px solid #005499; border-radius: 3px; background: #cce4f7; }
.pill + .pill { margin-left: 7px; }
.rbody { flex: 1; min-height: 0; margin-right: 7px; border: 1px solid #a0a0a0; border-width: 1px 1px 0 0; background: #fff; padding: 6px 6px 0; overflow: hidden; }
.rbox { border: 1px solid #b9cfea; border-width: 0 1px; overflow: hidden; }
.rhead { height: 26px; display: flex; align-items: center; gap: 5px; background: #b9cfea; padding-left: 4px; }
.rtitle { width: 205px; }
.count { width: 36px; height: 22px; border: 0; border-bottom: 1px solid #868686; text-align: center; padding: 0; }
.sq { width: 22px; height: 22px; display: grid; place-items: center; border: 1px solid #e6eaf0; background: #c3d3e9; }
.rtable { width: 100%; }
.grid .selcell { background: #0078d7; }
.arrow { color: #999; }

.ovbody { flex: 1; min-height: 0; overflow: hidden; background: #fff; padding: 5px 0 0 9px; }
.sec { background: #f0f0f0; margin-bottom: 2px; padding: 0 0 0 8px; overflow: hidden; }
.sec.gap { margin-top: 10px; }
h2 { margin: 0; height: 27px; display: flex; align-items: center; gap: 12px; font-size: 12px; font-weight: 700; }
h2 svg { width: 12px; height: 12px; }
dl { margin: 0; padding: 1px 0 4px; display: grid; grid-template-columns: 82px 1fr; column-gap: 8px; }
dt, dd { margin: 0; line-height: 20px; }
dt { text-align: right; }
.tool { display: flex; gap: 6px; padding: 4px 0 8px 11px; }
.big { width: 90px; height: 88px; flex: none; display: grid; place-items: center; background: #fdfdfd; border: 1px solid #ccc; border-radius: 3px; }
.big svg { width: 80px; height: 80px; }
.tooltext { flex: 1; display: flex; flex-direction: column; justify-content: space-between; align-items: flex-start; }
.tooltext p { margin: 0; line-height: 13px; white-space: nowrap; }
.tooltext .toggle { margin: 0 0 2px 3px; }
.toggle { appearance: none; width: 32px; height: 16px; border-radius: 8px; background: radial-gradient(circle at 24px 8px, #fff 6px, #00c400 7px); }
.check { display: flex; align-items: center; gap: 3px; height: 21px; padding-left: 10px; }
.check input { width: 13px; height: 13px; accent-color: #005fb8; }
ul { margin: 0; padding: 0 0 5px 13px; list-style: none; }
li { display: flex; align-items: center; gap: 12px; height: 27px; }
a { color: #0a62c9; text-decoration: none; }
.others { display: flex; gap: 15px; padding: 3px 0 9px 4px; }
.trow { display: flex; gap: 9px; padding: 6px 0 0 2px; }

.b4 { margin-left: 4px; }
.pbody { padding: 6px 0 0 5px; }
.pfilter { display: block; width: 100%; height: 20px; border: 0; border-bottom: 1px solid #868686; padding: 0 5px; outline: 0; }
.ptable { width: 100%; margin-top: 5px; border-collapse: separate; border-spacing: 0; table-layout: fixed; background: #fff; }
.ptable th { height: 23px; text-align: left; font-weight: 400; padding: 0 0 0 6px; }
.ptable td { height: 18px; padding: 0; border-bottom: 1px solid #ddd; }
.ptable th, .ptable td { border-right: 1px solid #ddd; }
.ptable td:first-child { background: #f7f7f7; }
.sorted { position: relative; }
.sorticon { position: absolute; top: 1px; left: 46px; width: 8px; height: 4px; }
```

FILE: app.js
```js
const pins = [
  ["A1", "PTG10", "SIUL2:gpio,202[...]", "", "", ""],
  ["B1", "PTA18", "SIUL2:gpio,18[...]", "eMIOS_1:emios_...", "", "LPSPI1:lpspi1_"],
  ["C1", "PTA19", "SIUL2:gpio,19[...]", "eMIOS_1:emios_...", "", "LPSPI1:lpspi1_"],
  ["D1", "PTA21", "SIUL2:gpio,21[...]", "eMIOS_1:emios_...", "FXIO:fxio_d0", "LPSPI2:lpspi2_"],
  ["E1", "PTE11", "SIUL2:gpio,139[...]", "eMIOS_0:emios_...", "FXIO:fxio_d5", "LPSPI2:lpspi2_"],
  ["F1", "PTE13", "SIUL2:gpio,141[...]", "eMIOS_1:emios_...", "FXIO:fxio_d5", "LPSPI2:lpspi2_"],
  ["G1", "PTA24", "SIUL2:gpi,24", "eMIOS_1:emios_...", "FXIO:fxio_d3_i", ""],
  ["H1", "PTA25", "SIUL2:gpi,25[...]", "eMIOS_1:emios_...", "FXIO:fxio_d2_i", ""],
  ["J1", "VSS246"],
  ["K1", "EXTAL"],
  ["L1", "XTAL"],
  ["M1", "PTE12", "SIUL2:gpio,140[...]", "eMIOS_1:emios_...", "FXIO:fxio_d8", ""],
  ["N1", "PTE3", "SIUL2:gpio,131[...]", "eMIOS_0:emios_...", "FXIO:fxio_d6", ""],
  ["P1", "PTA31", "SIUL2:gpio,31", "eMIOS_1:emios_...", "FXIO:fxio_d0", "LPSPI0:lpspi0_"],
  ["R1", "PTB18", "SIUL2:gpio,50", "eMIOS_1:emios_...", "FXIO:fxio_d1", "LPSPI1:lpspi1_"],
  ["T1", "PTB20", "SIUL2:gpio,52", "eMIOS_1:emios_...", "FXIO:fxio_d3", ""],
  ["U1", "PTB21", "SIUL2:gpio,53[...]", "eMIOS_1:emios_...", "FXIO:fxio_d4", ""],
  ["A2", "PTA8", "SIUL2:gpio,8[...]", "eMIOS_1:emios_...", "FXIO:fxio_d6", "LPSPI2:lpspi2_"],
  ["B2", "VSS240"],
  ["C2", "PTE16", "SIUL2:gpio,144[...]", "eMIOS_0:emios_...", "FXIO:fxio_d3", "LPSPI2:lpspi2_"],
  ["D2", "PTE15", "SIUL2:gpio,143[...]", "eMIOS_0:emios_...", "FXIO:fxio_d2", "LPSPI2:lpspi2_"],
  ["E2", "PTE10", "SIUL2:gpio,138[...]", "eMIOS_0:emios_...", "FXIO:fxio_d4", "LPSPI3:lpspi3_"],
  ["", "", "", "", "", ""]
];
document.getElementById("pinrows").innerHTML = pins.map(([id, name, siul, emios, fxio, spi]) => {
  const fixed = siul === undefined;
  const cells = ["", "", siul, emios, fxio, spi].map(t => `<td>${t || ""}</td>`).join("");
  return `<tr class="${fixed ? "fixed" : "free"}"><td><label class="pinlabel"><input type="checkbox" ${fixed ? "checked" : ""} disabled>${id}</label></td><td>${name}</td>${cells}</tr>`;
}).join("");

// Blank grid rows below the routed signals
document.getElementById("routes").insertAdjacentHTML("beforeend", ("<tr>" + "<td></td>".repeat(16) + "</tr>").repeat(18));

// Ball grid, seen from below: columns run 17..1, rows A..U
const power = new Set("B16 B2 D14 D9 D4 G11 G10 G7 H10 H9 H8 H7 H6 J14 J10 J9 J8 J7 J6 J4 J1 K11 K10 K9 K8 K1 L11 L8 L7 L1 N4 P14 P4 R10 R7 T16 T10 T7 T2".split(" "));
const rows = "ABCDEFGHJKLMNPRTU";
const pitch = 23.56;
let out = '<path d="M841 574V168l3-3h415l4 4v405z" fill="#808080"/><path d="M841.5 574V168l3-2.500h415" fill="none" stroke="#bbb"/><path d="M1262.500 168v406" stroke="#555"/><circle cx="1253" cy="175" r="5.500" fill="#009999" stroke="#9bc"/>';
for (let c = 0; c < 17; c++) {
  const x = Math.round(861 + c * pitch);
  const col = 17 - c;
  out += `<text x="${x}" y="118" fill="#333">${col}</text><path d="M${x + .5} 134v16" stroke="#000"/>`;
  for (let r = 0; r < 17; r++) {
    const y = Math.round(186 + r * pitch);
    const row = rows[r];
    if ("EN".includes(row) && col > 4 && col < 14) continue;
    if ("FGHJKLM".includes(row) && (col === 13 || col === 5)) continue;
    const id = row + col;
    if (id === "E16") out += `<rect x="${x - 6}" y="${y - 6}" width="12" height="12" fill="#ff0"/>`;
    out += `<rect x="${x - 4}" y="${y - 4}" width="8" height="8" fill="${id === "A13" ? "#0f0" : power.has(id) ? "#c4c4c4" : "#dedede"}"/><text x="${x}" y="${y + 10}" fill="#111">${id}</text>`;
  }
}
for (let r = 0; r < 17; r++) {
  const y = Math.round(186 + r * pitch);
  out += `<text x="791" y="${y}" fill="#333">${rows[r]}</text><path d="M809 ${y + .5}h16M1277 ${y + .5}h16" stroke="#000"/><text x="1310" y="${y}" fill="#333">${rows[r]}</text>`;
}
document.getElementById("bga-drawing").innerHTML = out;
```
